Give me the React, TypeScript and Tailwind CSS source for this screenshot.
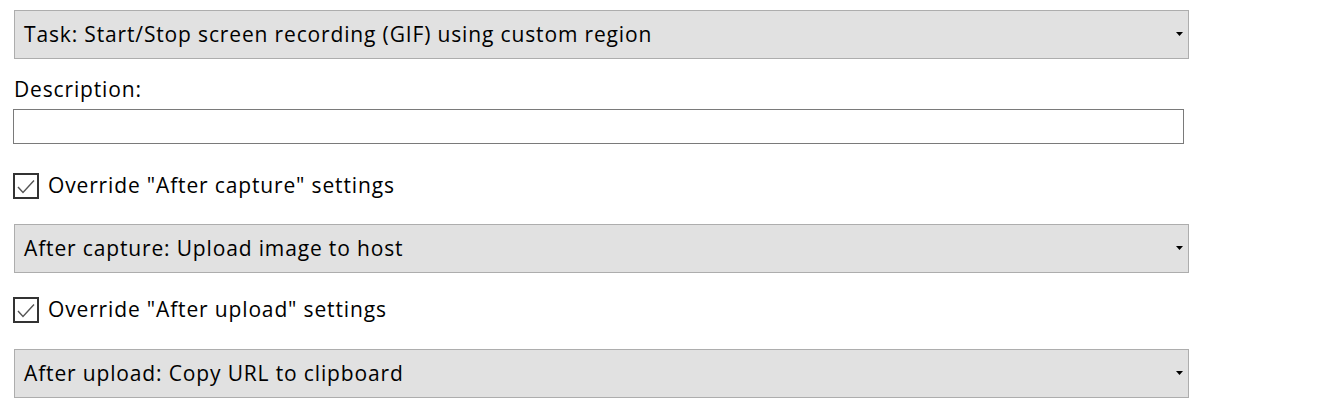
const FONT = "font-['Open_Sans',sans-serif]";
const TEXT = "text-[21px] leading-[27px] tracking-[0.85px] text-black";

function Dropdown({ label }: { label: string }) {
  return (
    <div className="flex h-[49px] w-[1175px] items-center justify-between border border-[#adadad] bg-[#e1e1e1] pl-[9px] pr-[5px]">
      <span className={TEXT}>{label}</span>
      <svg width="7" height="4" viewBox="0 0 7 4" className="mb-[2px]">
        <path d="M0 0H7L3.5 4Z" fill="#000" />
      </svg>
    </div>
  );
}

function Check({ label }: { label: string }) {
  return (
    <label className="flex items-center gap-[9px]">
      <span className="block h-[26px] w-[26px] border-2 border-[#333333] bg-white">
        <svg width="22" height="22" viewBox="0 0 22 22" className="block">
          <path d="M3 12L8 17.5L19 5.5" fill="none" stroke="#555" strokeWidth="1.4" />
        </svg>
      </span>
      <span className={TEXT}>{label}</span>
    </label>
  );
}

export default function App() {
  return (
    <div className={`${FONT} min-h-[415px] bg-white pl-[14px] pt-[10px]`}>
      <Dropdown label="Task: Start/Stop screen recording (GIF) using custom region" />

      <div className={`mt-[17px] ${TEXT}`}>Description:</div>
      <input
        type="text"
        className="-ml-px mt-[6px] block h-[35px] w-[1171px] border border-[#7a7a7a] bg-white px-1 outline-none"
      />

      <div className="-ml-px mt-[28px]">
        <Check label={'Override "After capture" settings'} />
      </div>
      <div className="mt-[25px]">
        <Dropdown label="After capture: Upload image to host" />
      </div>

      <div className="-ml-px mt-[23px]">
        <Check label={'Override "After upload" settings'} />
      </div>
      <div className="mt-[26px]">
        <Dropdown label="After upload: Copy URL to clipboard" />
      </div>
    </div>
  );
}
